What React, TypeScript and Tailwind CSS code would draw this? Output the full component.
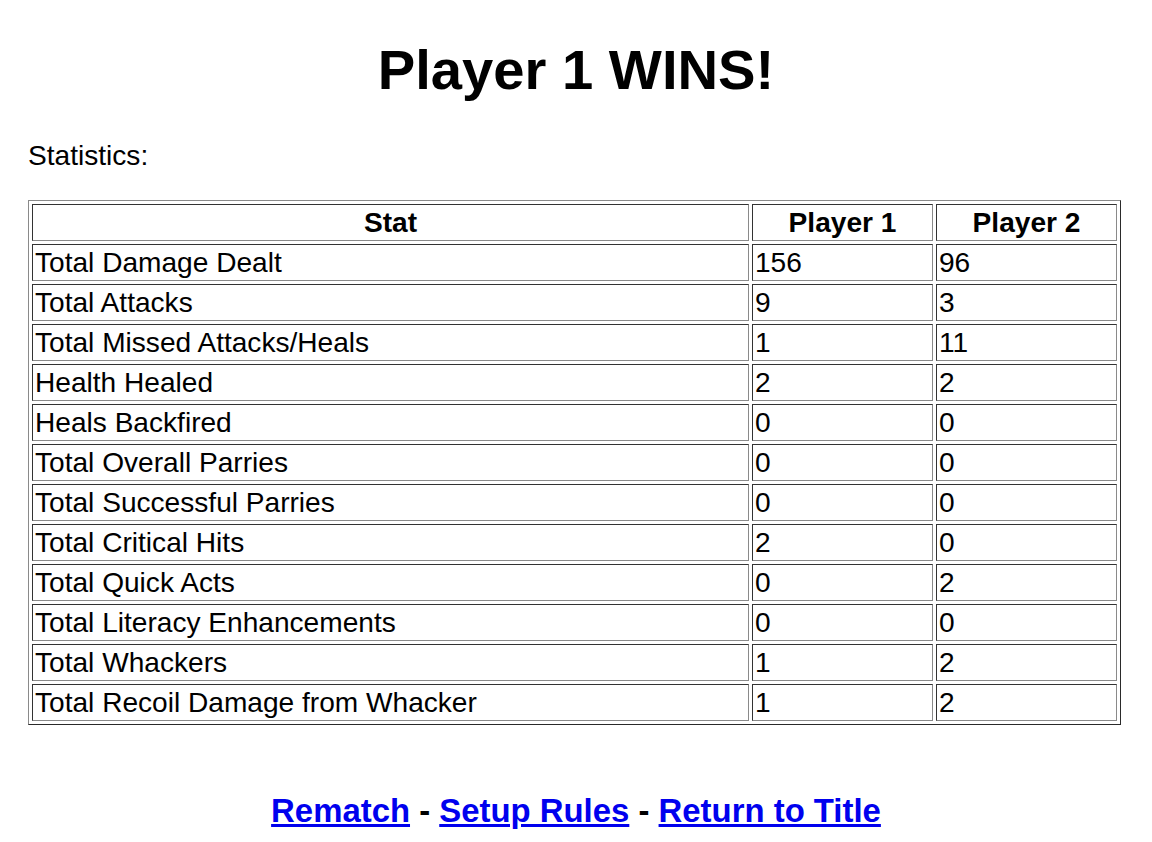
const stats: [string, number, number][] = [
  ["Total Damage Dealt", 156, 96],
  ["Total Attacks", 9, 3],
  ["Total Missed Attacks/Heals", 1, 11],
  ["Health Healed", 2, 2],
  ["Heals Backfired", 0, 0],
  ["Total Overall Parries", 0, 0],
  ["Total Successful Parries", 0, 0],
  ["Total Critical Hits", 2, 0],
  ["Total Quick Acts", 0, 2],
  ["Total Literacy Enhancements", 0, 0],
  ["Total Whackers", 1, 2],
  ["Total Recoil Damage from Whacker", 1, 2],
];

const cell =
  "border border-t-[#333333] border-l-[#333333] border-b-[#8a8a8a] border-r-[#8a8a8a] px-[2px] py-[2px] leading-[31px]";

export default function App() {
  return (
    <div className="min-h-screen bg-white px-[28px] pb-10 text-black font-['Liberation_Sans',Arial,sans-serif] text-[28.1px]">
      <h1 className="mt-[39px] text-center text-[56.2px] font-bold leading-[62.5px]">
        Player 1 WINS!
      </h1>
      <p className="mt-[38px] leading-[31px]">Statistics:</p>

      <table className="mt-[29px] w-[1093px] border-separate border-spacing-[3px] border border-t-[#8a8a8a] border-l-[#8a8a8a] border-b-[#2a2a2a] border-r-[#2a2a2a]">
        <thead>
          <tr>
            <th className={`${cell} text-center font-bold`}>Stat</th>
            <th className={`${cell} w-[181px] text-center font-bold`}>Player 1</th>
            <th className={`${cell} w-[181px] text-center font-bold`}>Player 2</th>
          </tr>
        </thead>
        <tbody>
          {stats.map(([name, p1, p2]) => (
            <tr key={name}>
              <td className={cell}>{name}</td>
              <td className={cell}>{p1}</td>
              <td className={cell}>{p2}</td>
            </tr>
          ))}
        </tbody>
      </table>

      <h3 className="mt-[68px] text-center text-[32.9px] font-bold leading-[36.5px]">
        <a href="#" className="text-[#0000ee] underline">
          Rematch
        </a>{" "}
        -{" "}
        <a href="#" className="text-[#0000ee] underline">
          Setup Rules
        </a>{" "}
        -{" "}
        <a href="#" className="text-[#0000ee] underline">
          Return to Title
        </a>
      </h3>
    </div>
  );
}
